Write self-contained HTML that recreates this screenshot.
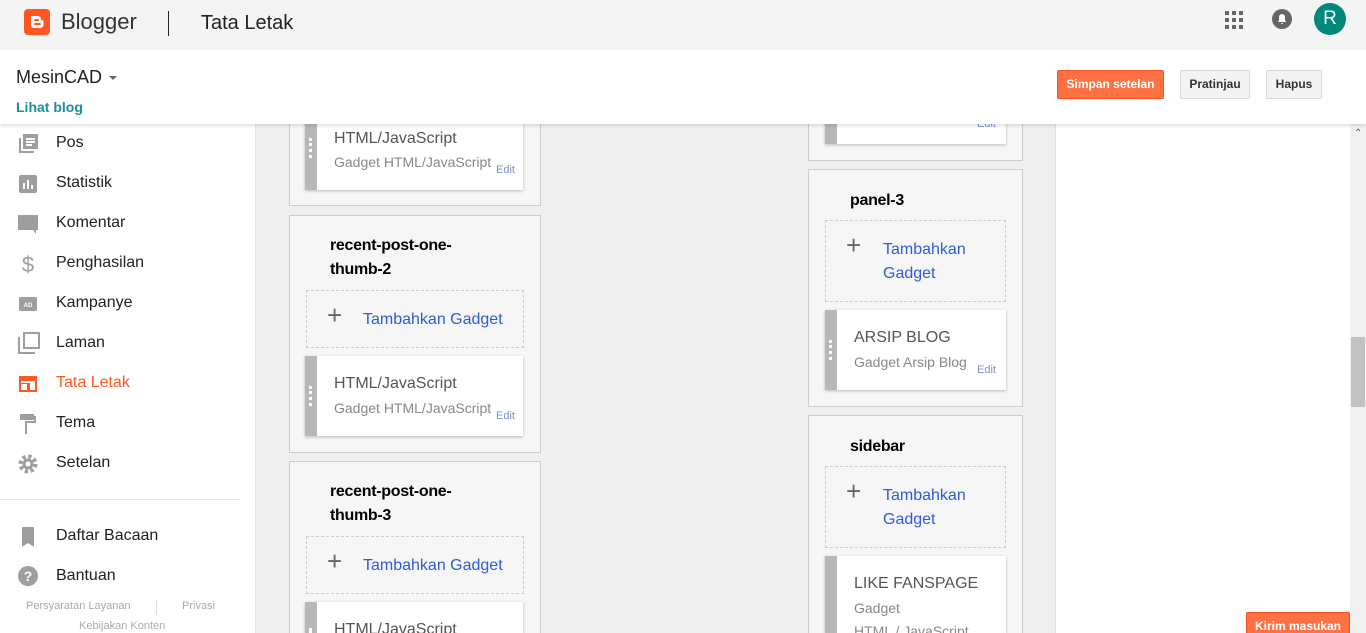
<!DOCTYPE html>
<html style="width:1366px;height:633px;overflow:hidden"><head><meta charset="utf-8">
<style>
*{box-sizing:border-box;margin:0;padding:0}
body{width:1366px;height:633px;overflow:hidden;position:relative;font-family:"Liberation Sans",Arial,sans-serif;background:#efefef;color:#212121}
.abs{position:absolute}
.top{left:0;top:0;width:1366px;height:50px;background:#f4f4f4}
.hdr{left:0;top:50px;width:1366px;height:74px;background:#fff;box-shadow:0 2px 3px rgba(0,0,0,.12);z-index:5}
.side{left:0;top:124px;width:256px;height:509px;background:#fff;border-right:1px solid #e5e5e5}
.item{position:absolute;left:56px;font-size:16px;color:#212121}
.ic{position:absolute;left:18px;width:20px;height:20px}
.rightw{left:1055px;top:124px;width:295px;height:509px;background:#fff;border-left:1px solid #e0e0e0}
.sb{left:1350px;top:124px;width:16px;height:509px;background:#f1f1f1}
.panel{position:absolute;background:#f6f6f6;border:1px solid #ccc}
.ptitle{position:absolute;font-weight:bold;font-size:16px;color:#000;line-height:24px;letter-spacing:-.3px}
.add{position:absolute;border:1px dashed #ccc;color:#2f5bd3;font-size:16px;line-height:24px}
.add .plus{position:absolute;color:#666;font-size:26px;font-weight:300}
.card{position:absolute;background:#fff;box-shadow:0 1px 3px rgba(0,0,0,.25);border-left:12px solid #b8b8b8}
.card .dots{position:absolute;left:-8px;width:3px;border-left:3px dotted #fff;height:20px}
.card .t{position:absolute;left:17px;font-size:16px;color:#555}
.card .s{position:absolute;left:17px;font-size:14px;color:#888}
.card .e{position:absolute;font-size:11px;color:#7a8fcc}
.btn{position:absolute;height:29px;border:1px solid #d8d8d8;background:#f3f3f3;border-radius:2px;font-size:12px;font-weight:bold;color:#333;text-align:center;line-height:27px}
</style></head><body>
<div class="abs top">
  <svg class="abs" style="left:24px;top:9px" width="26" height="26" viewBox="0 0 26 26"><rect width="26" height="26" rx="4" fill="#ff5722"/><path d="M7 7h7a3 3 0 0 1 3 3v1h1a1.5 1.5 0 0 1 1.5 1.5V16a3 3 0 0 1-3 3H10a3 3 0 0 1-3-3z" fill="#fff"/><rect x="10" y="10" width="5" height="2" rx="1" fill="#ff5722"/><rect x="10" y="14" width="7" height="2" rx="1" fill="#ff5722"/></svg>
  <div class="abs" style="left:61px;top:9px;font-size:22px;color:#333">Blogger</div>
  <div class="abs" style="left:168px;top:11px;width:1px;height:25px;background:#222"></div>
  <div class="abs" style="left:201px;top:12px;font-size:20px;color:#222">Tata Letak</div>
  <svg class="abs" style="left:1225px;top:11px" width="18" height="18"><g fill="#666"><rect x="0" y="0" width="4" height="4"/><rect x="7" y="0" width="4" height="4"/><rect x="14" y="0" width="4" height="4"/><rect x="0" y="7" width="4" height="4"/><rect x="7" y="7" width="4" height="4"/><rect x="14" y="7" width="4" height="4"/><rect x="0" y="14" width="4" height="4"/><rect x="7" y="14" width="4" height="4"/><rect x="14" y="14" width="4" height="4"/></g></svg>
  <svg class="abs" style="left:1272px;top:9px" width="20" height="20"><circle cx="10" cy="10" r="10" fill="#666"/><path d="M6 13h8l-1-2V8a3 3 0 0 0-6 0v3z M9 14h2a1 1 0 0 1-2 0z" fill="#fff"/></svg>
  <div class="abs" style="left:1314px;top:3px;width:32px;height:32px;border-radius:50%;background:#00897b;color:#fff;font-size:19px;text-align:center;line-height:32px">R</div>
</div>
<div class="abs hdr">
  <div class="abs" style="left:16px;top:17px;font-size:18px;color:#222">MesinCAD</div>
  <div class="abs" style="left:109px;top:26px;border:4px solid transparent;border-top:4px solid #666"></div>
  <div class="abs" style="left:16px;top:49px;font-size:14px;font-weight:bold;color:#1a8f9f">Lihat blog</div>
  <div class="btn" style="left:1057px;width:107px;top:20px;background:#ff7043;border-color:#f4511e;color:#fff">Simpan setelan</div>
  <div class="btn" style="left:1180px;width:70px;top:20px">Pratinjau</div>
  <div class="btn" style="left:1266px;width:56px;top:20px">Hapus</div>
</div>
<div class="abs side">
  <svg class="ic" style="top:10px" viewBox="0 0 20 20"><path d="M1 4v15h15v-2H3V4z M5 0h15v15H5z" fill="#9e9e9e"/><path d="M8 4h9v2H8zM8 7h9v2H8zM8 10h6v2H8z" fill="#fff"/></svg><div class="item" style="top:10px">Pos</div>
  <svg class="ic" style="top:50px" viewBox="0 0 20 20"><rect x="1" y="1" width="18" height="18" rx="2" fill="#9e9e9e"/><path d="M5 9h2v6H5zM9 6h2v9H9zM13 11h2v4h-2z" fill="#fff"/></svg><div class="item" style="top:50px">Statistik</div>
  <svg class="ic" style="top:90px" viewBox="0 0 20 20"><path d="M0 1h20v15h-2v4l-3-4H0z" fill="#9e9e9e"/></svg><div class="item" style="top:90px">Komentar</div>
  <div class="ic" style="top:128px;color:#9e9e9e;font-size:22px;text-align:center">$</div><div class="item" style="top:130px">Penghasilan</div>
  <svg class="ic" style="top:170px" viewBox="0 0 20 20"><rect x="1" y="3" width="18" height="14" rx="2" fill="#9e9e9e"/><text x="10" y="13" font-size="6" fill="#fff" text-anchor="middle" font-weight="bold" font-family="Liberation Sans">AD</text></svg><div class="item" style="top:170px">Kampanye</div>
  <svg class="ic" style="top:208px;width:22px;height:22px" viewBox="0 0 22 22"><path d="M1 5v16h16" fill="none" stroke="#9e9e9e" stroke-width="2"/><rect x="6" y="1" width="15" height="15" fill="none" stroke="#9e9e9e" stroke-width="2"/></svg><div class="item" style="top:210px">Laman</div>
  <svg class="ic" style="top:250px" viewBox="0 0 20 20"><rect x="1" y="2" width="18" height="16" fill="#ff5722"/><path d="M3 7h14v9h-6V9H3zM3 10h6v6H3z" fill="#fff"/><path d="M11 9h1v7h-1z" fill="#ff5722"/></svg><div class="item" style="top:250px;color:#ff5722">Tata Letak</div>
  <svg class="ic" style="top:290px" viewBox="0 0 20 20"><path d="M2 0h14v6H2zM16 2h2v7H9v3H7V7h9z M7 12h2v8H7z" fill="#9e9e9e"/></svg><div class="item" style="top:290px">Tema</div>
  <svg class="ic" style="top:330px" viewBox="0 0 20 20"><circle cx="10" cy="10" r="7" fill="none" stroke="#9e9e9e" stroke-width="5" stroke-dasharray="3 2.5"/><circle cx="10" cy="10" r="5.5" fill="#9e9e9e"/><circle cx="10" cy="10" r="2.5" fill="#fff"/></svg><div class="item" style="top:330px">Setelan</div>
  <div class="abs" style="left:0;top:375px;width:240px;height:1px;background:#e5e5e5"></div>
  <svg class="ic" style="top:403px" viewBox="0 0 20 20"><path d="M4 0h12v20l-6-4-6 4z" fill="#9e9e9e"/></svg><div class="item" style="top:403px">Daftar Bacaan</div>
  <svg class="ic" style="top:442px" viewBox="0 0 20 20"><circle cx="10" cy="10" r="10" fill="#9e9e9e"/><text x="10" y="15" font-size="14" font-weight="bold" fill="#fff" text-anchor="middle" font-family="Liberation Sans">?</text></svg><div class="item" style="top:443px">Bantuan</div>
  <div class="abs" style="left:26px;top:476px;font-size:11px;color:#aaa">Persyaratan Layanan</div>
  <div class="abs" style="left:156px;top:476px;width:1px;height:14px;background:#ddd"></div>
  <div class="abs" style="left:182px;top:476px;font-size:11px;color:#aaa">Privasi</div>
  <div class="abs" style="left:79px;top:496px;font-size:11px;color:#aaa">Kebijakan Konten</div>
</div>

<div class="panel" style="left:289px;top:100px;width:252px;height:106px"></div>
<div class="card" style="left:305px;top:100px;width:218px;height:90px"><div class="dots" style="top:38px"></div><div class="t" style="top:30px">HTML/JavaScript</div><div class="s" style="top:54px">Gadget HTML/JavaScript</div><div class="e" style="left:179px;top:64px">Edit</div></div>

<div class="panel" style="left:289px;top:215px;width:252px;height:238px"></div>
<div class="ptitle" style="left:330px;top:234px">recent-post-one-<br>thumb-2</div>
<div class="add" style="left:306px;top:290px;width:218px;height:58px"><span class="plus" style="left:20px;top:12px">+</span><span class="abs" style="left:56px;top:17px">Tambahkan Gadget</span></div>
<div class="card" style="left:305px;top:356px;width:218px;height:80px"><div class="dots" style="top:30px"></div><div class="t" style="top:19px">HTML/JavaScript</div><div class="s" style="top:44px">Gadget HTML/JavaScript</div><div class="e" style="left:179px;top:54px">Edit</div></div>

<div class="panel" style="left:289px;top:461px;width:252px;height:172px;border-bottom:none"></div>
<div class="ptitle" style="left:330px;top:480px">recent-post-one-<br>thumb-3</div>
<div class="add" style="left:306px;top:536px;width:218px;height:58px"><span class="plus" style="left:20px;top:12px">+</span><span class="abs" style="left:56px;top:17px">Tambahkan Gadget</span></div>
<div class="card" style="left:305px;top:602px;width:218px;height:31px"><div class="dots" style="top:26px;height:5px"></div><div class="t" style="top:19px">HTML/JavaScript</div></div>

<div class="panel" style="left:808px;top:100px;width:215px;height:61px"></div>
<div class="card" style="left:825px;top:100px;width:181px;height:44px"><div class="e" style="left:140px;top:18px">Edit</div></div>

<div class="panel" style="left:808px;top:169px;width:215px;height:238px"></div>
<div class="ptitle" style="left:850px;top:189px">panel-3</div>
<div class="add" style="left:825px;top:220px;width:181px;height:82px"><span class="plus" style="left:20px;top:12px">+</span><span class="abs" style="left:57px;top:17px">Tambahkan<br>Gadget</span></div>
<div class="card" style="left:825px;top:310px;width:181px;height:80px"><div class="dots" style="top:30px"></div><div class="t" style="top:19px">ARSIP BLOG</div><div class="s" style="top:44px">Gadget Arsip Blog</div><div class="e" style="left:140px;top:54px">Edit</div></div>

<div class="panel" style="left:808px;top:415px;width:215px;height:218px;border-bottom:none"></div>
<div class="ptitle" style="left:850px;top:435px">sidebar</div>
<div class="add" style="left:825px;top:466px;width:181px;height:82px"><span class="plus" style="left:20px;top:12px">+</span><span class="abs" style="left:57px;top:17px">Tambahkan<br>Gadget</span></div>
<div class="card" style="left:825px;top:556px;width:181px;height:77px;overflow:hidden"><div class="dots" style="top:40px"></div><div class="t" style="top:19px">LIKE FANSPAGE</div><div class="s" style="top:44px">Gadget</div><div class="s" style="top:67px">HTML / JavaScript</div></div>

<div class="abs rightw"></div>
<div class="abs sb"><div class="abs" style="left:4px;top:4px;font-size:10px;color:#555">&#8963;</div><div class="abs" style="left:1px;top:213px;width:14px;height:70px;background:#c1c1c1"></div></div>
<div class="abs" style="left:1246px;top:612px;width:104px;height:21px;background:#ff7043;border:1px solid #f4511e;border-bottom:none;border-radius:2px 2px 0 0;color:#fff;font-size:12px;font-weight:bold;text-align:center;line-height:26px;overflow:hidden">Kirim masukan</div>
</body></html>
